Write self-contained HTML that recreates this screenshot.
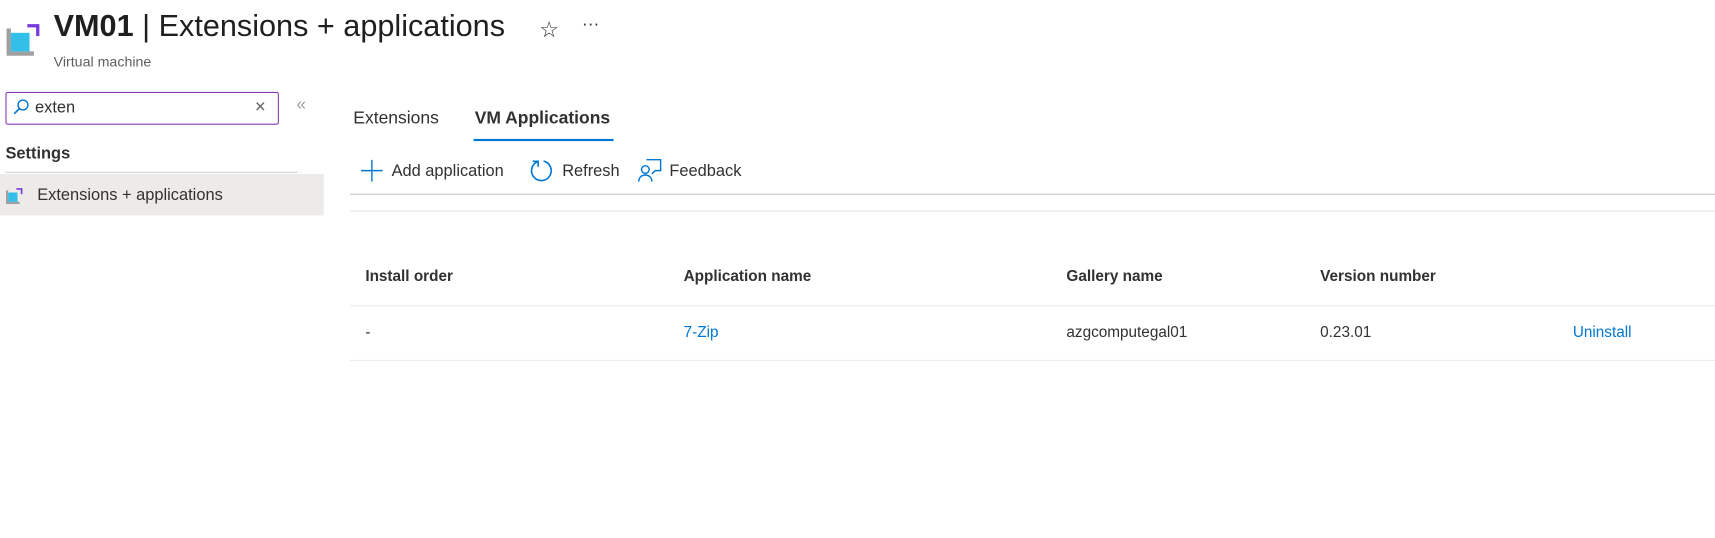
<!DOCTYPE html>
<html><head><style>
body{margin:0;width:1715px;height:538px;background:#fff;font-family:"Liberation Sans",sans-serif;color:#323130;position:relative;overflow:hidden}
#w{position:absolute;left:0;top:0;width:1568px;height:492px;transform:scale(1.09375);transform-origin:0 0}
.a{position:absolute;white-space:nowrap}
</style></head><body><div id="w">
<svg class="a" style="left:5px;top:20px" width="32" height="32" viewBox="0 0 32 32">
<path d="M1 6h4v21h21v4H1z" fill="#a0a0a0"/><rect x="5" y="10" width="17" height="17" fill="#32bfe8"/>
<path d="M20 2h11v11h-3V5h-8z" fill="#773adc"/></svg>
<div class="a" style="left:49px;top:8px;font-size:28px;color:#201f1e"><b>VM01</b> | Extensions + applications</div>
<div class="a" style="left:493px;top:15px;font-size:20px">☆</div>
<div class="a" style="left:532px;top:14px;font-size:16px">···</div>
<div class="a" style="left:49px;top:49px;font-size:13px;color:#605e5c">Virtual machine</div>
<div class="a" style="left:5px;top:84px;width:248px;height:28px;border:1px solid #8a3bb0;border-radius:2px"></div>
<svg class="a" style="left:11px;top:90px" width="16" height="16" viewBox="0 0 16 16"><circle cx="10" cy="6" r="4.5" fill="none" stroke="#0078d4" stroke-width="1.3"/><path d="M7 9L2 14" stroke="#0078d4" stroke-width="1.5"/></svg>
<div class="a" style="left:32px;top:90px;font-size:15px">exten</div>
<div class="a" style="left:233px;top:88px;font-size:17px;color:#605e5c">×</div>
<div class="a" style="left:271px;top:87px;font-size:16px;color:#a19f9d">«</div>
<div class="a" style="left:5px;top:132px;font-size:15px;font-weight:bold">Settings</div>
<div class="a" style="left:5px;top:157px;width:267px;height:1px;background:#d2d0ce"></div>
<div class="a" style="left:0;top:159px;width:296px;height:38px;background:#edebe9"></div>
<svg class="a" style="left:5px;top:171px" width="16" height="16" viewBox="0 0 32 32"><path d="M1 6h4v21h21v4H1z" fill="#a0a0a0"/><rect x="5" y="10" width="17" height="17" fill="#32bfe8"/><path d="M20 2h11v11h-3V5h-8z" fill="#773adc"/></svg>
<div class="a" style="left:34px;top:170px;font-size:15px">Extensions + applications</div>
<div class="a" style="left:323px;top:100px;font-size:16px">Extensions</div>
<div class="a" style="left:434px;top:100px;font-size:16px;font-weight:bold">VM Applications</div>
<div class="a" style="left:433px;top:127px;width:128px;height:2px;background:#0078d4"></div>
<svg class="a" style="left:330px;top:146px" width="20" height="20"><path d="M10 0v20M0 10h20" stroke="#0078d4" stroke-width="1.3"/></svg>
<div class="a" style="left:358px;top:148px;font-size:15px">Add application</div>
<svg class="a" style="left:484px;top:145px" width="22" height="22" viewBox="0 0 22 22"><path d="M7 3A9 9 0 1 0 13 2.3" fill="none" stroke="#0078d4" stroke-width="1.5"/><path d="M3 2.5h5v5" fill="none" stroke="#0078d4" stroke-width="1.5"/></svg>
<div class="a" style="left:514px;top:148px;font-size:15px">Refresh</div>
<svg class="a" style="left:583px;top:145px" width="22" height="22" viewBox="0 0 22 22"><path d="M8 1h13v10h-5l-3 3" fill="none" stroke="#0078d4" stroke-width="1.3"/><circle cx="7" cy="10" r="3.5" fill="none" stroke="#0078d4" stroke-width="1.3"/><path d="M1 21c0-4 3-6 6-6s6 2 6 6" fill="none" stroke="#0078d4" stroke-width="1.3"/></svg>
<div class="a" style="left:612px;top:148px;font-size:15px">Feedback</div>
<div class="a" style="left:320px;top:177px;width:1300px;height:1px;background:#c8c6c4"></div>
<div class="a" style="left:320px;top:192px;width:1300px;height:2px;background:#f3f2f1"></div>
<div class="a" style="top:244px;left:334px;font-size:14px;font-weight:bold">Install order</div>
<div class="a" style="top:244px;left:625px;font-size:14px;font-weight:bold">Application name</div>
<div class="a" style="top:244px;left:975px;font-size:14px;font-weight:bold">Gallery name</div>
<div class="a" style="top:244px;left:1207px;font-size:14px;font-weight:bold">Version number</div>
<div class="a" style="left:320px;top:279px;width:1300px;height:1px;background:#edebe9"></div>
<div class="a" style="top:295px;left:334px;font-size:14px">-</div>
<div class="a" style="top:295px;left:625px;font-size:14px;color:#0078d4">7-Zip</div>
<div class="a" style="top:295px;left:975px;font-size:14px">azgcomputegal01</div>
<div class="a" style="top:295px;left:1207px;font-size:14px">0.23.01</div>
<div class="a" style="top:295px;left:1438px;font-size:14px;color:#0078d4">Uninstall</div>
<div class="a" style="left:320px;top:329px;width:1300px;height:1px;background:#edebe9"></div>
</div></body></html>
